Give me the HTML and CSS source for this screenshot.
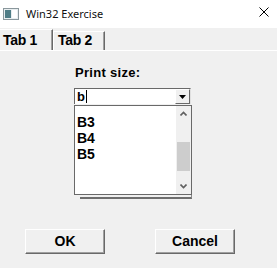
FILE: index.html
```
<!DOCTYPE html>
<html>
<head lang="en">
    <meta charset="UTF-8">
    <title>Win32 Exercise</title>
    <link rel="stylesheet" href="styles.css">
</head>
<body>
<div class="window">
    <div class="titlebar">
        <svg class="app-icon" width="16" height="12" viewBox="0 0 16 12">
            <rect x="0.5" y="0.5" width="15" height="11" fill="#e8eef0" stroke="#8a979c"/>
            <rect x="2" y="2" width="6" height="8" fill="#4f7d86"/>
            <rect x="9" y="2" width="5" height="8" fill="#ffffff"/>
        </svg>
        <span class="title">Win32 Exercise</span>
        <svg class="close" width="10" height="10" viewBox="0 0 10 10">
            <path d="M0.5 0.5 L9.5 9.5 M9.5 0.5 L0.5 9.5" stroke="#000" stroke-width="1"/>
        </svg>
    </div>
    <div class="tabs">
        <div class="tab active">Tab 1</div>
        <div class="tab">Tab 2</div>
    </div>
    <div class="panel">
        <div class="field">
            <div class="label">Print size:</div>
            <div class="combo">
                <div class="combo-edit">b<span class="caret"></span></div>
                <div class="combo-btn">
                    <svg width="7" height="4" viewBox="0 0 7 4"><path d="M0 0 H7 L3.5 4 Z" fill="#000"/></svg>
                </div>
            </div>
            <div class="list">
                <ul class="items">
                    <li>B3</li>
                    <li>B4</li>
                    <li>B5</li>
                </ul>
                <div class="scroll">
                    <div class="arrow">
                        <svg width="7" height="5" viewBox="0 0 7 5"><path d="M0.5 4.5 L3.5 1.5 L6.5 4.5" stroke="#606060" stroke-width="1.6" fill="none"/></svg>
                    </div>
                    <div class="track"><div class="thumb"></div></div>
                    <div class="arrow">
                        <svg width="7" height="5" viewBox="0 0 7 5"><path d="M0.5 0.5 L3.5 3.5 L6.5 0.5" stroke="#606060" stroke-width="1.6" fill="none"/></svg>
                    </div>
                </div>
            </div>
            <div class="list-shadow"></div>
        </div>
        <div class="buttons">
            <div class="btn">OK</div>
            <div class="btn">Cancel</div>
        </div>
    </div>
</div>
</body>
</html>
```
FILE: styles.css
```
* {
    margin: 0;
    padding: 0;
    box-sizing: border-box;
}

body {
    background-color: #f0f0f0;
    font-family: "Liberation Sans", Arial, sans-serif;
    font-size: 13px;
    font-weight: bold;
    color: #000;
}

.window {
    width: 277px;
    height: 268px;
}

.titlebar {
    height: 28px;
    background-color: #fff;
    display: flex;
    align-items: center;
    padding-left: 3px;
}

.app-icon {
    margin-top: -1px;
}

.title {
    font-family: "Noto Sans", "DejaVu Sans", sans-serif;
    font-weight: normal;
    font-size: 11px;
    margin-left: 7px;
    margin-top: -2px;
    color: #111;
}

.close {
    margin-left: auto;
    margin-right: 8px;
    margin-top: -4px;
}

.tabs {
    height: 22px;
    display: flex;
    align-items: flex-end;
}

.tab {
    height: 19px;
    line-height: 17px;
    padding-left: 4px;
    width: 52px;
    font-size: 14px;
    letter-spacing: -0.3px;
    border-top: 1px solid #fff;
    border-left: 1px solid #fff;
    border-right: 1px solid #696969;
    box-shadow: inset -1px 0 0 #a0a0a0;
}

.tab.active {
    height: 21px;
    line-height: 20px;
    width: 53px;
    padding-left: 3px;
    border-left: none;
}

.panel {
    border-top: 1px solid #fff;
    height: 218px;
}

.field {
    margin-left: 74px;
    width: 119px;
}

.label {
    margin-top: 14px;
    line-height: 16px;
    letter-spacing: 0.3px;
    margin-left: 1px;
}

.combo {
    margin-top: 7px;
    width: 117px;
    height: 16px;
    display: flex;
    background-color: #fff;
    border-top: 1px solid #696969;
    border-left: 1px solid #696969;
    border-right: 1px solid #e0e0e0;
}

.combo-edit {
    flex: 1;
    line-height: 14px;
    padding-left: 2px;
    display: flex;
    align-items: center;
}

.caret {
    display: inline-block;
    width: 1px;
    height: 13px;
    background-color: #000;
    margin-left: 1px;
}

.combo-btn {
    width: 15px;
    height: 15px;
    background-color: #f0f0f0;
    border-top: 1px solid #fff;
    border-left: 1px solid #fff;
    border-right: 1px solid #696969;
    border-bottom: 1px solid #696969;
    display: flex;
    align-items: center;
    justify-content: center;
}

.list {
    margin-top: 1px;
    width: 118px;
    height: 90px;
    background-color: #fff;
    border: 1px solid #696969;
    display: flex;
}

.items {
    flex: 1;
    list-style: none;
    padding-left: 2px;
    padding-top: 8px;
}

.items li {
    height: 16px;
    line-height: 16px;
    font-size: 14px;
}

.scroll {
    width: 15px;
    background-color: #f0f0f0;
    display: flex;
    flex-direction: column;
}

.arrow {
    height: 15px;
    display: flex;
    align-items: center;
    justify-content: center;
}

.track {
    flex: 1;
    padding-top: 21px;
}

.thumb {
    height: 29px;
    margin: 0 1px;
    background-color: #cdcdcd;
}

.list-shadow {
    margin-left: 6px;
    width: 112px;
    height: 4px;
    border-right: 1px solid #8a8a8a;
    border-bottom: 2px solid #6e6e6e;
}

.buttons {
    margin-top: 30px;
    margin-left: 25px;
    display: flex;
    gap: 50px;
}

.btn {
    width: 80px;
    height: 25px;
    line-height: 22px;
    text-align: center;
    font-size: 14px;
    border-top: 1px solid #fff;
    border-left: 1px solid #fff;
    border-right: 1px solid #696969;
    border-bottom: 1px solid #696969;
    box-shadow: inset -1px -1px 0 #a0a0a0;
}
```
